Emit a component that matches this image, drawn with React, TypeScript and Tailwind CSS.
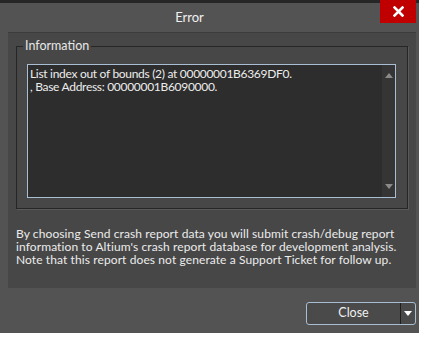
import React from 'react';

const font = { fontFamily: '"Segoe UI", Lato, "Noto Sans", sans-serif' };

export default function App() {
  return (
    <div className="w-[427px] h-[337px] bg-white overflow-hidden" style={font}>
      <div className="w-[419px] h-[333px] bg-[#535353] border-t-[3px] border-[#262626] flex flex-col relative">
        {/* Title bar */}
        <div className="h-[29px] flex items-center justify-center text-[13px] text-[#f0f0f0] pr-[40px]">
          Error
        </div>
        <button className="absolute right-[3px] -top-[3px] w-[36px] h-[23px] bg-[#c00000] flex items-center justify-center">
          <svg width="11" height="11" viewBox="0 0 11 11">
            <path d="M1.5 1.5 L9.5 9.5 M9.5 1.5 L1.5 9.5" stroke="#ffffff" strokeWidth="2.6" strokeLinecap="square" />
          </svg>
        </button>

        {/* Content panel */}
        <div className="ml-[8px] mr-[3px] h-[256px] bg-[#474747] border-t border-[#3c3c3c] flex flex-col pl-[8px] pt-[13px]">
          <div className="relative w-[392px] h-[163px] border border-[#262626] shadow-[1px_1px_0_#5a5a5a] pt-[17px] pl-[10px]">
            <span className="absolute -top-[9px] left-[6px] bg-[#474747] px-[2px] text-[12.5px] leading-[16px] text-[#e8e8e8]">
              Information
            </span>
            <div className="w-[369px] h-[134px] border border-[#a9bdd3] bg-[#2d2d2d] flex">
              <div className="flex-1 pl-[2px] pt-[2px] text-[12px] leading-[13px] tracking-[-0.3px] text-[#ececec] whitespace-nowrap">
                <div>List index out of bounds (2) at 00000001B6369DF0.</div>
                <div>, Base Address: 00000001B6090000.</div>
              </div>
              <div className="w-[13px] bg-[#353535] flex flex-col items-center justify-between py-[8px]">
                <svg width="8" height="5" viewBox="0 0 8 5">
                  <path d="M0 5 L4 0 L8 5 Z" fill="#8a8a8a" />
                </svg>
                <svg width="8" height="5" viewBox="0 0 8 5">
                  <path d="M0 0 L4 5 L8 0 Z" fill="#8a8a8a" />
                </svg>
              </div>
            </div>
          </div>
          <p className="mt-[18px] text-[12px] leading-[13px] tracking-[0.1px] text-[#ececec] whitespace-nowrap">
            By choosing Send crash report data you will submit crash/debug report
            <br />
            information to Altium's crash report database for development analysis.
            <br />
            Note that this report does not generate a Support Ticket for follow up.
          </p>
        </div>

        {/* Footer */}
        <div className="flex-1 flex items-start justify-end pr-[3px] pt-[14px]">
          <div className="w-[110px] h-[23px] rounded-[3px] border border-[#a9bdd3] bg-[#4a4a4a] flex text-[12.5px] text-[#f0f0f0]">
            <div className="flex-1 flex items-center justify-center">Close</div>
            <div className="w-[15px] border-l border-[#1e1e1e] flex items-center justify-center">
              <svg width="8" height="5" viewBox="0 0 8 5">
                <path d="M0 0 L4 5 L8 0 Z" fill="#ffffff" />
              </svg>
            </div>
          </div>
        </div>
      </div>
    </div>
  );
}
